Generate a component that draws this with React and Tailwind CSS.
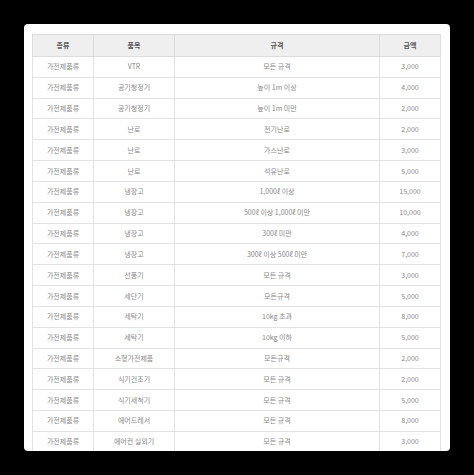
import React from 'react';

const rows = [
  ['가전제품류', 'VTR', '모든 규격', '3,000'],
  ['가전제품류', '공기청정기', '높이 1m 이상', '4,000'],
  ['가전제품류', '공기청정기', '높이 1m 미만', '2,000'],
  ['가전제품류', '난로', '전기난로', '2,000'],
  ['가전제품류', '난로', '가스난로', '3,000'],
  ['가전제품류', '난로', '석유난로', '5,000'],
  ['가전제품류', '냉장고', '1,000ℓ 이상', '15,000'],
  ['가전제품류', '냉장고', '500ℓ 이상 1,000ℓ 미만', '10,000'],
  ['가전제품류', '냉장고', '300ℓ 미만', '4,000'],
  ['가전제품류', '냉장고', '300ℓ 이상 500ℓ 미만', '7,000'],
  ['가전제품류', '선풍기', '모든 규격', '3,000'],
  ['가전제품류', '세단기', '모든규격', '5,000'],
  ['가전제품류', '세탁기', '10kg 초과', '8,000'],
  ['가전제품류', '세탁기', '10kg 이하', '5,000'],
  ['가전제품류', '소형가전제품', '모든규격', '2,000'],
  ['가전제품류', '식기건조기', '모든 규격', '2,000'],
  ['가전제품류', '식기세척기', '모든 규격', '5,000'],
  ['가전제품류', '에어드레서', '모든 규격', '8,000'],
  ['가전제품류', '에어컨 실외기', '모든 규격', '3,000'],
];

const headers = ['종류', '품목', '규격', '금액'];

export default function App() {
  return (
    <div className="w-[474px] h-[475px] bg-black pt-[24px] pl-[24px] font-['Noto_Sans_CJK_KR',sans-serif]">
      <div className="w-[426px] h-[427px] bg-white rounded-[4px] overflow-hidden pt-[10px] pl-[8px]">
        <table className="w-[408px] table-fixed border-collapse text-center opacity-[0.99]">
          <colgroup>
            <col className="w-[61px]" />
            <col className="w-[81px]" />
            <col className="w-[205px]" />
            <col className="w-[61px]" />
          </colgroup>
          <thead>
            <tr className="bg-[#efefef]">
              {headers.map((h) => (
                <th
                  key={h}
                  className="h-[22px] p-0 border border-[#dcdcdc] text-[7px] leading-none font-semibold text-[#555]"
                >
                  {h}
                </th>
              ))}
            </tr>
          </thead>
          <tbody>
            {rows.map((r, i) => (
              <tr key={i}>
                {r.map((c, j) => (
                  <td
                    key={j}
                    className="h-[20.83px] p-0 border border-[#e2e2e2] text-[7px] leading-none text-[#888]"
                  >
                    {c}
                  </td>
                ))}
              </tr>
            ))}
          </tbody>
        </table>
      </div>
    </div>
  );
}
